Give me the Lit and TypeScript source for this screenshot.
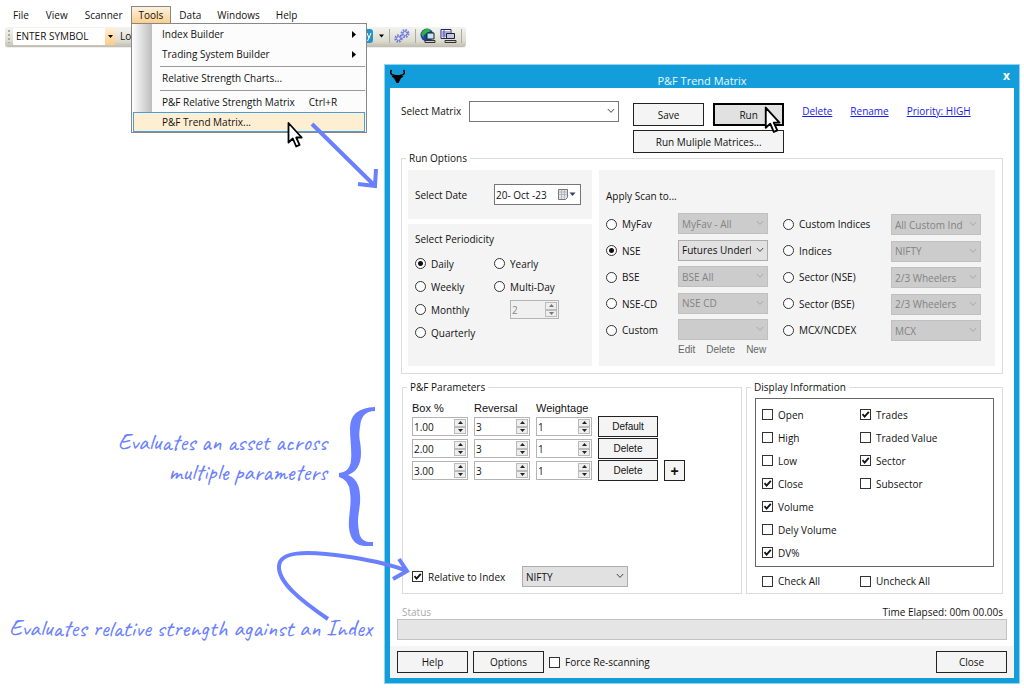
import { LitElement, html, css } from "lit";
import { customElement, property } from "lit/decorators.js";

const base = css`
  * { box-sizing: border-box; }
  input, button, select { font: inherit; color: inherit; margin: 0; border-radius: 0; }
  button { padding: 0; background: #f4f4f4; border: 1px solid #222; }
  label { display: flex; align-items: center; gap: 5px; white-space: nowrap; }
  input[type="checkbox"], input[type="radio"] {
    appearance: none; width: 11px; height: 11px; flex: none; background: #fff; border: 1px solid #333;
  }
  input[type="radio"] { border-radius: 50%; }
  input[type="radio"]:checked { background: radial-gradient(circle, #111 0 2px, #fff 3px); }
  input[type="checkbox"]:checked {
    background: #fff url("data:image/svg+xml,%3Csvg xmlns='http://www.w3.org/2000/svg' viewBox='0 0 9 9'%3E%3Cpath d='M1.5 4.2 3.6 6.6 7.8 1.8' fill='none' stroke='%23111' stroke-width='1.8'/%3E%3C/svg%3E") center / 9px 9px no-repeat;
  }
`;

@customElement("drop-down")
class DropDown extends LitElement {
  @property() value = "";
  @property() label = "";
  @property({ type: Boolean }) disabled = false;
  static styles = [base, css`
    :host { display: block; position: relative; height: 21px; color: #111; --fill: #e1e1e1; --edge: #adadad; }
    select { appearance: none; display: block; width: 100%; height: 100%; padding: 0 16px 0 3px;
      background: var(--fill); border: 1px solid var(--edge); opacity: 1; line-height: 16px; }
    select:disabled { color: #838383; background: #ccc; border-color: #c0c0c0; }
    svg { position: absolute; right: 4px; top: 7px; width: 8px; height: 6px; pointer-events: none; fill: none; stroke: #444; }
    .off { stroke: #a8a8a8; }
  `];
  render() {
    return html`<select aria-label=${this.label} ?disabled=${this.disabled}><option>${this.value}</option></select>
      <svg class=${this.disabled ? "off" : "on"} viewBox="0 0 8 6"><path d="M.8 1 4 4.4 7.2 1" /></svg>`;
  }
}

@customElement("number-box")
class NumberBox extends LitElement {
  @property() value = "";
  @property() label = "";
  @property({ type: Boolean }) disabled = false;
  static styles = [base, css`
    :host { display: block; color: #111; }
    .box { display: flex; height: 19px; border: 1px solid #b4b4b4; background: #fff; }
    .off { background: #f0f0f0; color: #888; }
    input { flex: 1; min-width: 0; width: 0; border: 0; padding: 0 1px; background: transparent; appearance: textfield; }
    input::-webkit-inner-spin-button { display: none; }
    .spin { display: grid; grid-template-rows: 1fr 1fr; width: 12px; margin: 1px; }
    button { display: flex; align-items: center; justify-content: center; min-height: 0; background: #eee; border: 1px solid #bbb; }
    svg { width: 5px; height: 3px; fill: #222; }
    .off svg { fill: #777; }
  `];
  render() {
    return html`<div class="box ${this.disabled ? "off" : ""}">
      <input type="number" step="any" aria-label=${this.label} .value=${this.value} ?disabled=${this.disabled} />
      <div class="spin">
        <button aria-label="Increase" ?disabled=${this.disabled}><svg viewBox="0 0 5 3"><path d="M0 3 2.5 0 5 3z" /></svg></button>
        <button aria-label="Decrease" ?disabled=${this.disabled}><svg viewBox="0 0 5 3"><path d="M0 0 2.5 3 5 0z" /></svg></button>
      </div></div>`;
  }
}

const pointer = html`<svg class="pointer" viewBox="0 0 16 26"><path d="M1.5 1.5V21l4.3-4 3.4 8 3.4-1.600-3.400-7.400h5.500z" fill="#fff" stroke="#000" stroke-width="1.800" stroke-linejoin="round" /></svg>`;

@customElement("app-menu")
class AppMenu extends LitElement {
  static styles = [base, css`
    :host { display: block; color: #111; }
    nav { display: flex; padding: 6px 0 0 5px; }
    nav button { background: none; border: 1px solid transparent; border-bottom: 0; height: 17px; padding: 0 7px; }
    nav button:nth-child(-n+2) { padding-right: 8px; }
    nav .open { background: linear-gradient(#fdf2df, #ffcf8d); border-color: #888; }
    .bar { display: flex; align-items: center; width: 461px; height: 20px; margin: 4px 0 0 5px; padding: 0 4px 2px 3px; gap: 5px;
      background: linear-gradient(#f4f4ef, #dddccf 70%, #bebdaf); border-radius: 3px; box-shadow: 0 1px #eee; }
    .grip { width: 2px; height: 13px; background: repeating-linear-gradient(#aaa 0 2px, transparent 2px 4px); }
    .combo { display: flex; width: 102px; height: 17px; background: #fff; margin-left: -2px; }
    .combo input { width: 92px; border: 0; padding: 0 3px; background: transparent; }
    .combo button { width: 10px; border: 0; background: linear-gradient(#fff0d5, #ffcb86); }
    .combo svg { display: block; width: 5px; height: 3px; margin: 0 auto; }
    .icons { margin-left: auto; width: 104px; height: 18px; }
    .menu { position: absolute; z-index: 2; left: 131px; top: 23px; width: 236px; padding: 0 1px; border: 1px solid #888; background: linear-gradient(90deg, #fff, #dedede 10px, #bdbdbd 20px, #fcfcfc 20px); }
    .item { display: flex; align-items: center; width: 100%; height: 20px; padding: 0 9px 0 29px; background: none; border: 0; text-align: left; }
    .item svg { width: 4px; height: 7px; margin-left: auto; }
    .key { margin-left: 14px; }
    .hot { background: #ffefd2; border: 1px solid #4b9edb; padding-left: 28px; }
    hr { margin: 2px 0 1px 27px; border: 0; border-top: 1px solid #999; }
    .pointer { position: absolute; left: 155px; top: 97px; width: 16px; height: 27px; }
  `];
  render() {
    const arrow = html`<svg viewBox="0 0 4 7"><path d="M0 0 4 3.5 0 7z" /></svg>`;
    return html`
      <nav>${["File", "View", "Scanner", "Tools", "Data", "Windows", "Help"].map(t => html`<button class=${t === "Tools" ? "open" : ""}>${t}</button>`)}</nav>
      <div class="bar">
        <span class="grip"></span>
        <div class="combo"><input aria-label="Symbol" value="ENTER SYMBOL" /><button aria-label="Symbols"><svg viewBox="0 0 5 3"><path d="M0 0h5L2.500 3z" /></svg></button></div>
        <span>Lo</span>
        <svg class="icons" viewBox="358 28 104 18">
          <rect x="358" y="30" width="15" height="14" rx="3" fill="#2394c8" /><path d="m367 34 2 5 2-5m-2 5-1.500 3" fill="none" stroke="#fff" />
          <path d="M379 35.500h5l-2.500 3z" />
          <path d="M389.500 30v14M415.500 30v14M461.500 30v14" stroke="#aaa" />
          <g fill="none" stroke="#6f7de0"><circle cx="398.500" cy="39.500" r="3" stroke-width="2.500" stroke-dasharray="1.500 1" /><circle cx="398.500" cy="39.500" r="2" /><circle cx="405" cy="34.500" r="3.200" stroke-width="2.500" stroke-dasharray="1.500 1" /><circle cx="405" cy="34.500" r="2" /></g>
          <circle cx="427" cy="36" r="6.500" fill="#1c3fae" /><path d="M422 33q3-4 7-3t-2 4-2 5q-5-2-3-6" fill="#2fb53c" />
          <path d="M427 34h7v6h-7z" fill="#bde7f5" stroke="#222" /><path d="M425 41.500h10v2h-10z" fill="#ccc" stroke="#333" />
          <path d="M441 30.500h10v9h-10z" fill="#fff" stroke="#226" /><path d="M442 33h8m-8 2h7m-7 2h7m-5-6v8" stroke="#33a" stroke-width=".8" />
          <path d="M446.500 34.500h8v5h-8z" fill="#bfc9ef" stroke="#222" /><path d="M445 41.500h11v2h-11z" fill="#ccc" stroke="#333" />
        </svg>
      </div>
      <div class="menu">
        <button class="item">Index Builder${arrow}</button>
        <button class="item">Trading System Builder${arrow}</button>
        <hr />
        <button class="item">Relative Strength Charts...</button>
        <hr />
        <button class="item">P&amp;F Relative Strength Matrix<span class="key">Ctrl+R</span></button>
        <button class="item hot">P&amp;F Trend Matrix...</button>
        ${pointer}
      </div>`;
  }
}

const periods = ["Daily", "Yearly", "Weekly", "Multi-Day", "Monthly", "", "Quarterly"];
const scans = [
  ["MyFav", "MyFav - All", "Custom Indices", "All Custom Ind"],
  ["NSE", "Futures Underlying", "Indices", "NIFTY"],
  ["BSE", "BSE All", "Sector (NSE)", "2/3 Wheelers"],
  ["NSE-CD", "NSE CD", "Sector (BSE)", "2/3 Wheelers"],
  ["Custom", "", "MCX/NCDEX", "MCX"],
];
const params = [["1.00", "Default"], ["2.00", "Delete"], ["3.00", "Delete"]];
const shown = ["Open", "Trades", "High", "Traded Value", "Low", "Sector", "Close", "Subsector", "Volume", "", "Dely Volume", "", "DV%"];
const ticked = ["Trades", "Sector", "Close", "Volume", "DV%"];

@customElement("trend-dialog")
class TrendDialog extends LitElement {
  static styles = [base, css`
    :host { display: block; background: #fff; border: 5px solid #139edb; border-top: 0; color: #111; box-shadow: 0 0 0 1px #8fd3f0; }
    header { display: flex; height: 23px; background: #139edb; color: #e8f6fd; }
    header svg { width: 15px; height: 15px; margin-top: 4px; }
    h1 { flex: 1; margin: 0; padding-top: 4px; font-size: 11px; line-height: 24px; font-weight: 400; text-align: center; }
    .x { width: 15px; height: 22px; border: 0; background: none; color: #fff; font-weight: 700; font-size: 12px; line-height: 20px; }
    .top { display: flex; padding: 13px 0 0 11px; height: 62px; }
    .top > label { align-items: center; gap: 8px; height: 20px; }
    .matrix { width: 150px; --fill: #fff; --edge: #777; }
    .acts { position: relative; display: grid; grid-template-columns: 71px 71px; gap: 4px 9px; margin: 2px 0 0 14px; align-content: start; }
    .acts button { height: 23px; }
    .acts .run { border: 2px solid #000; background: #e1e1e1; }
    .wide { grid-column: span 2; }
    .pointer { position: absolute; left: 131px; top: 3px; width: 17px; height: 27px; }
    .links { display: flex; gap: 18px; margin: 0 0 0 18px; height: 20px; align-items: center; }
    a { color: #1a1af0; }
    fieldset { border: 1px solid #dcdcdc; margin: 0; padding: 0; min-width: 0; }
    legend { padding: 0 3px; margin-left: 4px; line-height: 16px; }
    .outer { margin: 0 11px; }
    .run-opts { padding: 4px 7px 7px 6px; display: grid; grid-template-columns: 184px 1fr; gap: 7px; }
    .left { display: grid; gap: 5px; }
    .panel { background: #f4f4f4; padding: 0 7px; }
    .date { display: flex; align-items: center; justify-content: space-between; height: 49px; padding-right: 11px; }
    .datebox { display: flex; align-items: center; width: 87px; height: 21px; border: 1px solid #777; background: #fff; }
    .datebox input { width: 62px; border: 0; padding: 0 1px; background: none; }
    .datebox button { border: 0; background: none; display: flex; }
    .datebox svg { width: 19px; height: 13px; }
    .period { height: 142px; padding-top: 7px; }
    .grid { display: grid; grid-template-columns: 79px 1fr; grid-auto-rows: 23px; align-items: center; margin-top: 5px; }
    .grid number-box { width: 49px; margin-left: 16px; }
    .scan { padding: 18px 14px 0 7px; }
    .scan p, .period p { margin: 0; line-height: 16px; }
    .scans { display: grid; grid-template-columns: 72px 90px 1fr 90px; height: 128px; margin-top: 9px; align-content: space-between; }
    .scans label { height: 22px; }
    .scans label.second { margin-left: 15px; }
    .scans drop-down.second { margin-top: 1px; }
    .tiny { display: flex; gap: 11px; margin: 1px 0 0 72px; color: #666; font-family: "Liberation Sans", sans-serif; font-size: 10px; }
    .tiny button { border: 0; background: none; }
    .pair { display: grid; grid-template-columns: 340px 1fr; gap: 4px; margin: 5px 11px 0 12px; }
    .pair fieldset { height: 215px; }
    .params { display: flex; flex-direction: column; justify-content: space-between; }
    .table { display: grid; grid-template-columns: 56px 56px 56px 60px 21px; gap: 1px 6px; padding: 6px 0 0 9px; align-items: center; grid-template-rows: 14px; }
    .table span { font-family: "Liberation Sans", sans-serif; font-size: 11px; }
    .table button { height: 21px; font-family: "Liberation Sans", sans-serif; font-size: 10px; }
    .table .add { font-weight: 700; font-size: 14px; line-height: 16px; }
    .rel { display: flex; align-items: center; justify-content: space-between; width: 216px; margin: 82px 0 6px 9px; }
    .rel drop-down { width: 106px; }
    .info { padding: 0 8px; }
    .info legend { margin-left: -4px; }
    .list { border: 1px solid #666; margin-top: 3px; padding: 4px 0 0 6px; height: 169px; display: grid; grid-template-columns: 98px 1fr; grid-auto-rows: 23px; align-items: center; }
    .all { display: grid; grid-template-columns: 98px 1fr; padding: 6px 0 0 7px; }
    .status { display: flex; justify-content: space-between; padding: 11px 11px 0 12px; line-height: 14px; }
    .muted { color: #aaa; }
    .progress { height: 21px; margin: 0 7px 6px; background: #e5e5e5; border: 1px solid #c2c2c2; }
    footer { display: flex; align-items: center; gap: 5px; height: 32px; padding: 0 7px; background: #f4f4f4; }
    footer button { width: 71px; height: 22px; }
    footer button:last-child { margin-left: auto; }
  `];
  render() {
    const radio = (g: string, t: string, on: boolean, c = "") => html`<label class=${c}><input type="radio" name=${g} ?checked=${on} />${t}</label>`;
    const check = (t: string) => t ? html`<label><input type="checkbox" ?checked=${ticked.includes(t)} />${t}</label>` : html`<span></span>`;
    return html`
      <header>
        <svg viewBox="0 0 15 15"><path d="M1.500 1C.300 3 .300 5.200 2.500 5.900 4 6.500 5 6.500 6 6.800M13.500 1C14.700 3 14.700 5.200 12.500 5.900 11 6.500 10 6.500 9 6.800" fill="none" stroke="#000" stroke-width="1.500" /><path d="M5 6h5l3.500 1.300-2.700 2.200-2.300 4.500h-2L4.200 9.500 1.500 7.300z" /></svg>
        <h1>P&amp;F Trend Matrix</h1>
        <button class="x" aria-label="Close window">x</button>
      </header>
      <div class="top">
        <label>Select Matrix <drop-down class="matrix" label="Select Matrix"></drop-down></label>
        <div class="acts"><button>Save</button><button class="run">Run</button><button class="wide">Run Muliple Matrices...</button>${pointer}</div>
        <div class="links"><a href="#">Delete</a><a href="#">Rename</a><a href="#">Priority: HIGH</a></div>
      </div>
      <fieldset class="outer"><legend>Run Options</legend>
        <div class="run-opts">
        <div class="left">
          <div class="panel date"><label for="date">Select Date</label>
            <div class="datebox"><input id="date" value="20- Oct -23" /><button aria-label="Open calendar"><svg viewBox="0 0 19 13"><path d="M1.500 1.500h9v8l-2 2h-7z" fill="#dde3ea" stroke="#777" /><path d="M1.500 4h9m-9 2.500h9M4.500 2v9m3-9v9" stroke="#aaa" stroke-width=".700" /><path d="M12.500 4.500h6l-3 3.500z" fill="#346" /></svg></button></div>
          </div>
          <div class="panel period"><p>Select Periodicity</p>
            <div class="grid">${periods.map(p => p ? radio("period", p, p === "Daily") : html`<number-box label="Days" value="2" disabled></number-box>`)}</div>
          </div>
        </div>
        <div class="panel scan"><p>Apply Scan to...</p>
          <div class="scans">${scans.map(([a, b, c, d]) => html`
            ${radio("scan", a, a === "NSE")}<drop-down label=${a} value=${b} ?disabled=${a !== "NSE"}></drop-down>
            ${radio("scan", c, false, "second")}<drop-down class="second" label=${c} value=${d} disabled></drop-down>`)}</div>
          <div class="tiny"><button>Edit</button><button>Delete</button><button>New</button></div>
        </div></div>
      </fieldset>
      <div class="pair">
        <fieldset class="params"><legend>P&amp;F Parameters</legend>
          <div class="table"><span>Box %</span><span>Reversal</span><span>Weightage</span><i></i><i></i>
            ${params.map(([v, b], i) => html`<number-box label="Box %" value=${v}></number-box><number-box label="Reversal" value="3"></number-box><number-box label="Weightage" value="1"></number-box><button>${b}</button>${i === 2 ? html`<button class="add" aria-label="Add row">+</button>` : html`<i></i>`}`)}
          </div>
          <div class="rel"><label><input type="checkbox" checked />Relative to Index</label><drop-down label="Index" value="NIFTY"></drop-down></div>
        </fieldset>
        <fieldset class="info"><legend>Display Information</legend>
          <div class="list">${shown.map(check)}</div>
          <div class="all">${check("Check All")}${check("Uncheck All")}</div>
        </fieldset>
      </div>
      <div class="status"><span class="muted">Status</span><span>Time Elapsed: 00m 00.00s</span></div>
      <div class="progress" role="progressbar" aria-label="Status"></div>
      <footer><button>Help</button><button>Options</button>${check("Force Re-scanning")}<button>Close</button></footer>`;
  }
}

@customElement("app-root")
class AppRoot extends LitElement {
  static styles = [base, css`
    :host { display: block; position: relative; min-height: 100vh; background: #fff; font: 10px/16px "Open Sans", "Noto Sans", sans-serif; }
    trend-dialog { position: absolute; left: 385px; right: 5px; top: 65px; }
    .note { position: absolute; margin: 0; color: #6a80ff; font: 500 24px/30px Caveat, cursive; text-align: right; white-space: nowrap; }
    .params { left: 60px; width: 267px; top: 427px; }
    .rel { left: 9px; top: 613px; }
    .marks { position: absolute; z-index: 3; left: 0; top: 0; width: 1024px; height: 688px; pointer-events: none; fill: none; stroke: #6a80ff; stroke-width: 4; }
    .brace { fill: #6a80ff; stroke: none; }
  `];
  render() {
    return html`<app-menu></app-menu>
      <trend-dialog></trend-dialog>
      <p class="note params">Evaluates an asset across<br />multiple parameters</p>
      <p class="note rel">Evaluates relative strength against an Index</p>
      <svg class="marks" viewBox="0 0 1024 688">
        <path d="M312 124 374 185M376 169 375 186 358 184" />
        <path d="M328 619C300 600 278 582 279 566 280 552 302 550 350 557 375 561 395 566 407 571M399 559 407 571 393 579" />
        <path class="brace" d="M375 407Q350 408 350 428C350 440 352 451 351 460Q350 472 339 473V477Q349 480 350 492C352 506 348 515 349 528Q351 546 366 546H373V542Q360 543 359 531C356 515 361 510 360 495Q359 479 348 475 361 470 361 453C361 440 358 440 360 427Q361 411 375 411z" />
      </svg>`;
  }
}
